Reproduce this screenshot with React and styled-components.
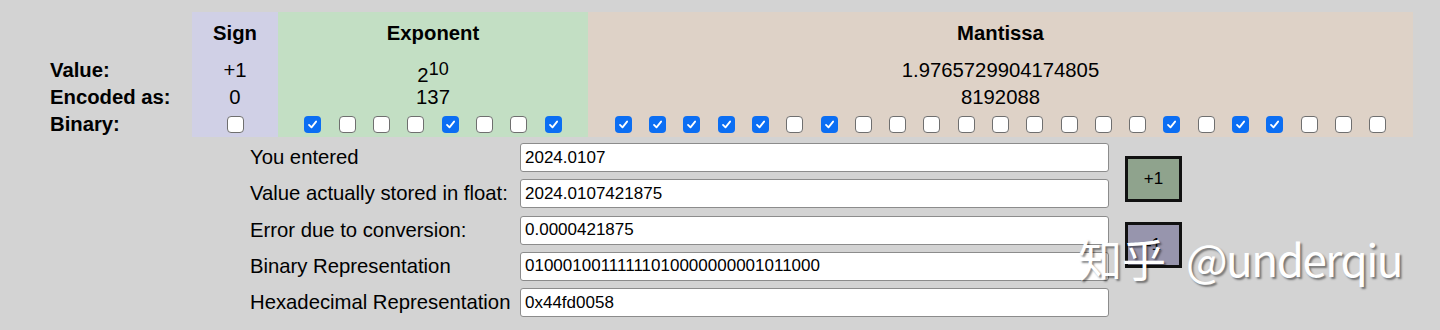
import styled, { createGlobalStyle } from "styled-components";

const GlobalStyle = createGlobalStyle`
	body {
		margin: 0;
		background: #d3d3d3;
	}
`;

const SIGN = [0];
const EXPONENT = [1, 0, 0, 0, 1, 0, 0, 1];
const MANTISSA = [
	1, 1, 1, 1, 1, 0, 1, 0, 0, 0, 0, 0, 0, 0, 0, 0, 1, 0, 1, 1, 0, 0, 0,
];

const FIELDS = [
	{ label: "You entered", value: "2024.0107" },
	{ label: "Value actually stored in float:", value: "2024.0107421875" },
	{ label: "Error due to conversion:", value: "0.0000421875" },
	{ label: "Binary Representation", value: "01000100111111010000000001011000" },
	{ label: "Hexadecimal Representation", value: "0x44fd0058" },
];

const COLORS = {
	sign: "#d0d0e6",
	exponent: "#c3dfc4",
	mantissa: "#ded2c7",
};

const Bit = ({ on }) => (
	<BitBox $on={on}>
		{on ? (
			<svg width="11" height="11" viewBox="0 0 12 12">
				<path
					d="M2.2 6.4 L4.9 9.1 L9.9 2.8"
					fill="none"
					stroke="#fff"
					strokeWidth="2"
					strokeLinecap="round"
					strokeLinejoin="round"
				/>
			</svg>
		) : null}
	</BitBox>
);

const BitRow = ({ bits }) => (
	<BitGroup>
		{bits.map((b, i) => (
			<Bit key={i} on={b === 1} />
		))}
	</BitGroup>
);

const App = () => {
	return (
		<Page>
			<GlobalStyle />
			<FieldTable>
				<Cell />
				<Cell $bg={COLORS.sign} $head>
					Sign
				</Cell>
				<Cell $bg={COLORS.exponent} $head>
					Exponent
				</Cell>
				<Cell $bg={COLORS.mantissa} $head>
					Mantissa
				</Cell>

				<RowLabel>Value:</RowLabel>
				<Cell $bg={COLORS.sign}>+1</Cell>
				<Cell $bg={COLORS.exponent}>
					<Power>
						2<Sup>10</Sup>
					</Power>
				</Cell>
				<Cell $bg={COLORS.mantissa}>1.9765729904174805</Cell>

				<RowLabel>Encoded as:</RowLabel>
				<Cell $bg={COLORS.sign}>0</Cell>
				<Cell $bg={COLORS.exponent}>137</Cell>
				<Cell $bg={COLORS.mantissa}>8192088</Cell>

				<RowLabel>Binary:</RowLabel>
				<Cell $bg={COLORS.sign}>
					<BitRow bits={SIGN} />
				</Cell>
				<Cell $bg={COLORS.exponent}>
					<BitRow bits={EXPONENT} />
				</Cell>
				<Cell $bg={COLORS.mantissa}>
					<BitRow bits={MANTISSA} />
				</Cell>
			</FieldTable>

			<Lower>
				<Form>
					{FIELDS.map((f) => (
						<FieldRow key={f.label}>
							<FieldLabel>{f.label}</FieldLabel>
							<ValueInput type="text" readOnly value={f.value} />
						</FieldRow>
					))}
				</Form>
				<Buttons>
					<StepButton $bg="#8fa38d">+1</StepButton>
					<StepButton $bg="#9795ad">-1</StepButton>
				</Buttons>
			</Lower>

			<Watermark>
				<span>知乎</span>
				<Handle>@underqiu</Handle>
			</Watermark>
		</Page>
	);
};

export default App;

const Page = styled.div`
	position: relative;
	width: 1440px;
	height: 330px;
	box-sizing: border-box;
	padding-top: 12px;
	overflow: hidden;
	background: #d3d3d3;
	color: #000;
	font-family: "Liberation Sans", Arial, sans-serif;
	font-size: 20.3px;
`;

const FieldTable = styled.div`
	display: grid;
	grid-template-columns: 142px 86px 310px 825px;
	grid-template-rows: 45px 27px 27px 26px;
	margin-left: 50px;
`;

const Cell = styled.div`
	display: flex;
	align-items: center;
	justify-content: center;
	padding-bottom: ${(p) => (p.$head ? "3px" : "0")};
	background: ${(p) => p.$bg || "transparent"};
	font-weight: ${(p) => (p.$head ? 700 : 400)};
	white-space: nowrap;
`;

const RowLabel = styled.div`
	display: flex;
	align-items: center;
	font-weight: 700;
	white-space: nowrap;
`;

const Power = styled.span`
	padding-top: 10px;
`;

const Sup = styled.sup`
	font-size: 18px;
	vertical-align: 7px;
	line-height: 0;
`;

const BitGroup = styled.div`
	display: flex;
	gap: 17.3px;
`;

const BitBox = styled.span`
	display: flex;
	align-items: center;
	justify-content: center;
	width: 17px;
	height: 17px;
	box-sizing: border-box;
	border-radius: 4px;
	border: ${(p) => (p.$on ? "none" : "1.5px solid #6f6f6f")};
	background: ${(p) => (p.$on ? "#0b6ef3" : "#fff")};
`;

const Lower = styled.div`
	display: flex;
	align-items: flex-start;
	gap: 16px;
	margin-top: 6px;
	margin-left: 250px;
`;

const Form = styled.div`
	display: flex;
	flex-direction: column;
	gap: 7.3px;
`;

const FieldRow = styled.div`
	display: grid;
	grid-template-columns: 270px 589px;
	align-items: center;
	height: 29px;
`;

const FieldLabel = styled.span`
	white-space: nowrap;
`;

const ValueInput = styled.input`
	box-sizing: border-box;
	width: 589px;
	height: 29px;
	margin: 0;
	padding: 0 4px;
	border: 1.5px solid #8c8c8c;
	border-radius: 3px;
	background: #fff;
	color: #000;
	font-family: "Liberation Sans", Arial, sans-serif;
	font-size: 17px;
	outline: none;
`;

const Buttons = styled.div`
	display: flex;
	flex-direction: column;
	gap: 20px;
	padding-top: 13px;
`;

const StepButton = styled.button`
	box-sizing: border-box;
	width: 57px;
	height: 46px;
	margin: 0;
	padding: 0;
	border: 3px solid #111;
	border-radius: 0;
	background: ${(p) => p.$bg};
	color: #000;
	font-family: "Liberation Sans", Arial, sans-serif;
	font-size: 17px;
`;

const Watermark = styled.div`
	position: absolute;
	left: 1078px;
	top: 236px;
	display: flex;
	gap: 20px;
	color: #fff;
	font-family: "Noto Sans CJK SC", "Noto Sans", sans-serif;
	font-size: 44px;
	line-height: 1;
	white-space: nowrap;
	text-shadow: 2px 2px 2px rgba(0, 0, 0, 0.45);
	pointer-events: none;
`;

const Handle = styled.span`
	letter-spacing: -1.5px;
`;
